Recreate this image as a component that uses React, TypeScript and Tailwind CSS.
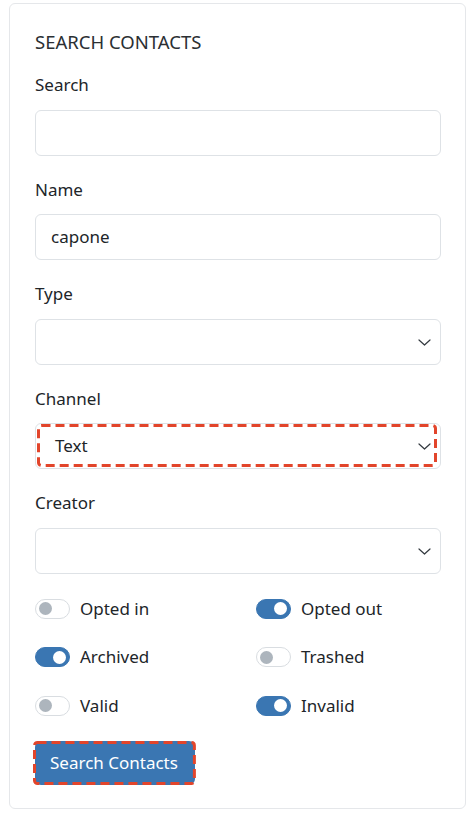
import type { ReactNode } from "react";

const font = { fontFamily: '"Noto Sans", "Open Sans", sans-serif' };

function Chevron() {
  return (
    <svg width="13" height="7" viewBox="0 0 13 7" className="text-[#343a40]">
      <path d="M1 1l5.5 5 5.5-5" fill="none" stroke="currentColor" strokeWidth="1.2" strokeLinecap="round" strokeLinejoin="round" />
    </svg>
  );
}

function DashedOutline() {
  return (
    <svg className="pointer-events-none absolute inset-0 h-full w-full overflow-visible">
      <rect
        x="1.5"
        y="1.5"
        width="calc(100% - 3px)"
        height="calc(100% - 3px)"
        rx="3"
        fill="none"
        stroke="#e2452b"
        strokeWidth="3"
        strokeDasharray="9 5"
      />
    </svg>
  );
}

function Field({ label, children }: { label: string; children: ReactNode }) {
  return (
    <div className="flex flex-col">
      <label className="h-6 text-[17px] leading-6 text-[#212529]">{label}</label>
      <div className="mt-[12.5px]">{children}</div>
    </div>
  );
}

function TextBox({ value }: { value?: string }) {
  return (
    <div className="flex h-[46px] items-center rounded-md border border-[#dee2e6] bg-white px-[15px] text-[17px] text-[#212529]">
      {value}
    </div>
  );
}

function SelectBox({ value, highlight }: { value?: string; highlight?: boolean }) {
  return (
    <div className="relative flex h-[46px] items-center justify-between rounded-md border border-[#dee2e6] bg-white pl-[19px] pr-[4px] text-[17px] text-[#212529]">
      <span>{value}</span>
      <span className="mr-[5px] mt-[1px]">
        <Chevron />
      </span>
      {highlight ? (
        <div className="absolute bottom-[1px] left-[1px] right-[3px] top-[0px]">
          <DashedOutline />
        </div>
      ) : null}
    </div>
  );
}

function Toggle({ label, on }: { label: string; on?: boolean }) {
  return (
    <div className="flex h-6 items-center">
      <span
        className={
          on
            ? "flex h-[20px] w-[35px] items-center justify-end rounded-full border border-[#3a76b2] bg-[#3a76b2] px-[3px]"
            : "flex h-[20px] w-[35px] items-center justify-start rounded-full border border-[#d9dde1] bg-white px-[3px]"
        }
      >
        <span className={on ? "h-[13px] w-[13px] rounded-full bg-white" : "h-[13px] w-[13px] rounded-full bg-[#adb5bd]"} />
      </span>
      <span className="ml-[10px] text-[17px] leading-6 text-[#212529]">{label}</span>
    </div>
  );
}

export default function App() {
  return (
    <div className="min-h-[815px] bg-white pl-[9px] pr-[8px] pt-[3px]" style={font}>
      <div className="h-[806px] rounded-md border border-[#e5e7ea] bg-white pl-[25px] pr-[24px] pt-[26px]">
        <h2 className="h-6 text-[18.5px] leading-6 text-[#2b2f33]">SEARCH CONTACTS</h2>
        <div className="mt-[19px] flex flex-col gap-[22px]">
          <Field label="Search">
            <TextBox />
          </Field>
          <Field label="Name">
            <TextBox value="capone" />
          </Field>
          <Field label="Type">
            <SelectBox />
          </Field>
          <Field label="Channel">
            <SelectBox value="Text" highlight />
          </Field>
          <Field label="Creator">
            <SelectBox />
          </Field>
        </div>
        <div className="mt-[23px] grid grid-cols-2 gap-y-[24.5px]">
          <Toggle label="Opted in" />
          <div className="pl-[18px]">
            <Toggle label="Opted out" on />
          </div>
          <Toggle label="Archived" on />
          <div className="pl-[18px]">
            <Toggle label="Trashed" />
          </div>
          <Toggle label="Valid" />
          <div className="pl-[18px]">
            <Toggle label="Invalid" on />
          </div>
        </div>
        <div className="relative mt-[23px] inline-flex">
          <button className="h-[44px] rounded-md bg-[#3a76b2] pl-[15px] pr-[17px] text-[17px] text-white">
            Search Contacts
          </button>
          <div className="absolute -left-[2px] -right-[1px] top-0 bottom-0">
            <DashedOutline />
          </div>
        </div>
      </div>
    </div>
  );
}
